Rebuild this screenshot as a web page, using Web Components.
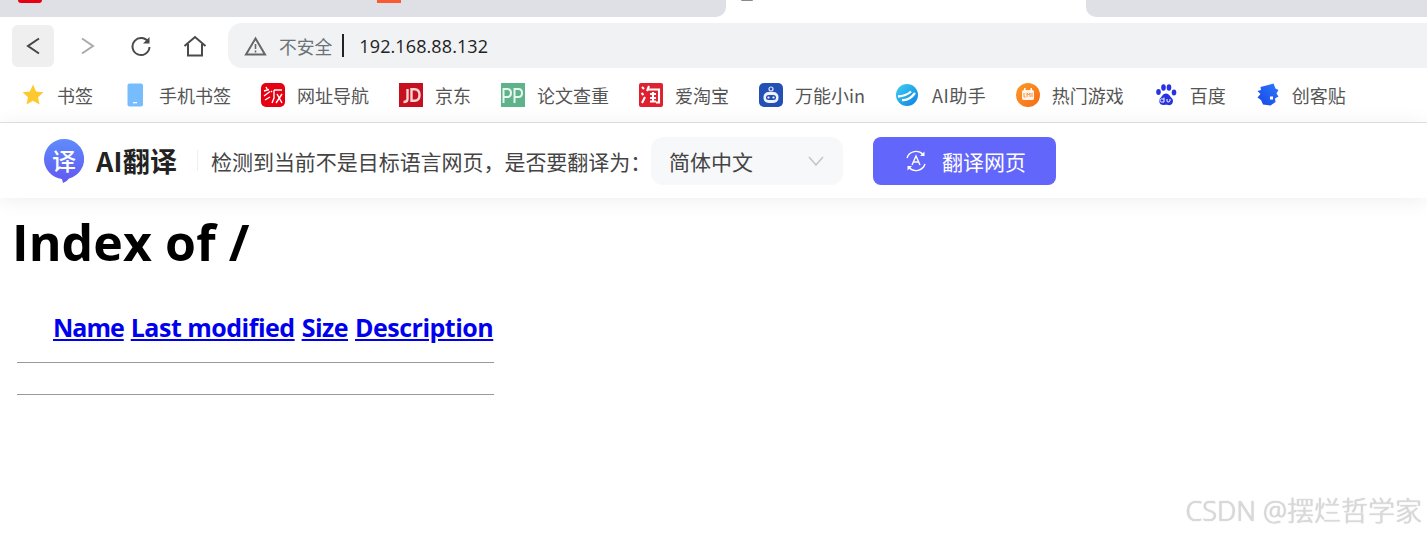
<!DOCTYPE html>
<html lang="zh"><head><meta charset="utf-8"><title>Index of /</title>
<style>
html,body{margin:0;height:100%;background:#fff;overflow:hidden}
body{width:1427px;height:537px;position:relative;font-family:"Noto Sans","Noto Sans CJK SC",sans-serif}
</style></head><body>
<x-tabstrip></x-tabstrip>
<x-toolbar></x-toolbar>
<x-bookmarks>
<x-bookmark label="书签"><svg viewBox="0 0 24 24"><path fill="#fdc92f" d="M12 1.500l3.100 6.900 7.300.8-5.400 5 1.500 7.300-6.500-3.700-6.500 3.700 1.500-7.300-5.400-5 7.300-.8z"/></svg></x-bookmark>
<x-bookmark label="手机书签"><svg viewBox="0 0 24 24"><rect x="4.500" y="0.500" width="15.500" height="23" rx="2" fill="#77bdfd"/><rect x="10" y="19" width="4" height="1.300" fill="#fff"/></svg></x-bookmark>
<x-bookmark label="网址导航"><svg viewBox="0 0 24 24"><rect width="24" height="24" rx="5" fill="#e60012"/><path d="M3 8l5-1.500M5 4l1.500 3M3 13l6-4.500M4 17l5-3M13 7h8M13 7v8l-2 5M16 11l5 9M21 11l-6 9M11 8l-1 1" stroke="#fff" stroke-width="1.400" fill="none"/></svg></x-bookmark>
<x-bookmark label="京东"><svg viewBox="0 0 24 24"><rect width="24" height="24" fill="#c5111f"/><path d="M8.500 6v10q0 3-4 3" stroke="#f6d5d8" stroke-width="2.400" fill="none"/><path d="M12.500 6.200h3q5 0 5 5.800t-5 5.800h-3z" stroke="#f6d5d8" stroke-width="2.400" fill="none"/></svg></x-bookmark>
<x-bookmark label="论文查重"><svg viewBox="0 0 24 24"><rect width="24" height="24" fill="#5fb38b"/><path d="M2.500 20V6h4q3.500 0 3.500 4t-3.500 4h-4M13.500 20V6h4q3.500 0 3.500 4t-3.500 4h-4" stroke="#e9f5ef" stroke-width="2" fill="none"/></svg></x-bookmark>
<x-bookmark label="爱淘宝"><svg viewBox="0 0 24 24"><rect width="24" height="24" rx="2" fill="#df2030"/><path d="M3 4l2 2M2.500 10l2 2M3 20l3-6M10 3l-2 5M9 6.500h11v13h-3M11 11h6M11 15h6M14 9v9M11 18.500h6" stroke="#fff" stroke-width="2.100" fill="none"/></svg></x-bookmark>
<x-bookmark label="万能小in"><svg viewBox="0 0 24 24"><rect width="24" height="24" rx="5" fill="#2350b4"/><circle cx="12" cy="6" r="2" fill="none" stroke="#dfe8fb" stroke-width="1.200"/><rect x="4.500" y="9" width="15" height="11" rx="5" fill="#eef3ff"/><rect x="7" y="12" width="10" height="5" rx="2.500" fill="#2350b4"/><circle cx="9.500" cy="14.500" r="1.100" fill="#fff"/><circle cx="14.500" cy="14.500" r="1.100" fill="#fff"/></svg></x-bookmark>
<x-bookmark label="AI助手" style="--ls:.5px;--gap:13px"><svg viewBox="0 0 24 24"><defs><linearGradient id="e" x1="0" y1="0" x2="1" y2="1"><stop offset="0" stop-color="#3fd0ef"/><stop offset="1" stop-color="#0d7fe8"/></linearGradient></defs><circle cx="12" cy="12" r="11" fill="url(#e)"/><path d="M3 13.500q8-.5 13-5M7 17q7 1 13-7" stroke="#fff" stroke-width="2.300" fill="none"/></svg></x-bookmark>
<x-bookmark label="热门游戏" style="--gap:11.500px"><svg viewBox="0 0 24 24"><defs><linearGradient id="g" x1="0" y1="0" x2="1" y2="1"><stop offset="0" stop-color="#fd9a2a"/><stop offset="1" stop-color="#f56a16"/></linearGradient></defs><circle cx="12" cy="12" r="12" fill="url(#g)"/><rect x="6" y="7" width="12" height="10" rx="1.500" fill="#fff" opacity=".9"/><rect x="8" y="5" width="1.500" height="3" fill="#fff"/><rect x="14.500" y="5" width="1.500" height="3" fill="#fff"/><path d="M8 10v4h1.500M11 14v-4l1.500 2 1.500-2v4M16 10v4" stroke="#f58a2a" stroke-width=".9" fill="none"/></svg></x-bookmark>
<x-bookmark label="百度"><svg viewBox="0 0 24 24"><g fill="#2932e1"><ellipse cx="4.500" cy="9" rx="2.300" ry="3"/><ellipse cx="9.500" cy="4.500" rx="2.300" ry="3.200"/><ellipse cx="15" cy="4.500" rx="2.300" ry="3.200"/><ellipse cx="20" cy="9.500" rx="2.300" ry="3"/><path d="M12 10.500c-3 0-4 3-6 5-2 3 0 7 4 6.500 1.500-.2 2.500-.5 4 0 4 1 6-3 4.500-6-2-2-3.500-5.500-6.500-5.500z"/></g><path d="M10 14.500v4.500H8.200a1.600 1.600 0 1 1 0-3H10M13 16v2q0 1 1.200 1t1.800-1v-2" fill="none" stroke="#fff" stroke-width="1"/></svg></x-bookmark>
<x-bookmark label="创客贴"><svg viewBox="0 0 24 24"><defs><linearGradient id="c" x1="1" y1="0" x2="0" y2="1"><stop offset="0" stop-color="#2d7bfa"/><stop offset="1" stop-color="#1844e8"/></linearGradient></defs><path fill="url(#c)" d="M4.500 4L17.500.5l2 5 3 1.500-2 3.500 2 3-3.500 2 .5 3.500-5 3.500-7.500-1L5 17 1.500 14.500 4.500 11 1.500 8 5 7z"/><rect x="14" y="13.500" width="3" height="3" fill="#fff"/></svg></x-bookmark>
</x-bookmarks>
<x-translate-bar></x-translate-bar>
<x-listing></x-listing>
<x-watermark>CSDN @摆烂哲学家</x-watermark>
<script>
function el(name,css,html){
  customElements.define(name,class extends HTMLElement{
    constructor(){super();const s=this.attachShadow({mode:"open"});
      s.innerHTML=`<style>${css}</style>`+(typeof html==="function"?html(this):html);}
  });
}
el("x-tabstrip",`
:host{display:flex;height:23px;background:#fff;overflow:hidden}
.tab{height:17px;background:#dfe0e5;position:relative}
.l{width:726px;border-bottom-right-radius:10px}
.m{width:360px}
.r{flex:1;border-bottom-left-radius:10px}
i{position:absolute;top:0;display:block}
.a{left:18px;width:24px;height:3px;background:#e60012;border-radius:0 0 6px 6px}
.b{left:377px;width:24px;height:3px;background:#f95a32}
.c{left:15px;width:12px;height:1px;background:#8a8a8a;border-radius:0 0 6px 6px}
.m.tab{background:#fff}
`,`<div class="tab l"><i class="a"></i><i class="b"></i></div><div class="tab m"><i class="c"></i></div><div class="tab r"></div>`);
el("x-toolbar",`
:host{display:flex;align-items:center;height:45px;padding-left:12px;box-sizing:border-box;background:#fff}
.btn{width:42px;height:42px;display:flex;align-items:center;justify-content:center;border-radius:6px;margin-right:12px}
.btn.on{background:#efefef}
svg{display:block}
.addr{flex:1;height:45px;background:#f1f2f4;border-radius:14px 0 0 14px;display:flex;align-items:center;padding-left:16px;font-size:18px}
.warn{color:#6b7177;font-size:17.800px;margin-left:12px;white-space:nowrap}
.bar{width:2px;height:23px;background:#222;margin:0 15px 0 10px}
.url{color:#222;font-size:18px;font-family:"Open Sans","Noto Sans",sans-serif;letter-spacing:.1px}
`,`<div class="btn on"><svg width="16" height="22" viewBox="0 0 16 22"><path d="M14 3.500L3 11l11 7.500" fill="none" stroke="#444" stroke-width="2"/></svg></div>
<div class="btn"><svg width="16" height="22" viewBox="0 0 16 22"><path d="M3 3.500L14 11 3 18.500" fill="none" stroke="#aaa" stroke-width="2"/></svg></div>
<div class="btn"><svg width="22" height="22" viewBox="0 0 22 22"><path d="M18.500 7.500A8.500 8.500 0 1 0 19.500 12" fill="none" stroke="#4a4a4a" stroke-width="2"/><path d="M19.500 2v6.500H13z" fill="#4a4a4a"/></svg></div>
<div class="btn"><svg width="24" height="22" viewBox="0 0 24 22"><path d="M1.500 11L12 2l10.500 9M5 9v11.500h14V9" fill="none" stroke="#4a4a4a" stroke-width="2"/></svg></div>
<div class="addr"><svg width="23" height="20" viewBox="0 0 23 20"><path d="M11.500 2.500L2 18.500h19z" fill="none" stroke="#666" stroke-width="2"/><path d="M11.500 8v5M11.500 14.500v2" stroke="#666" stroke-width="1.600"/></svg><span class="warn">不安全</span><span class="bar"></span><span class="url">192.168.88.132</span></div>`);
el("x-bookmarks",`
:host{display:flex;align-items:center;gap:30px;height:55px;padding-left:21px;box-sizing:border-box;border-bottom:1px solid #e3e3e3;background:#fff}
`,`<slot></slot>`);
el("x-bookmark",`
:host{display:flex;align-items:center;gap:var(--gap,12px);letter-spacing:var(--ls,0);color:#555;font-size:18px;font-family:"Noto Sans CJK SC","Noto Sans",sans-serif;white-space:nowrap}
.i{width:24px;height:24px;display:block}
::slotted(svg){width:24px;height:24px;display:block}
`,h=>`<span class="i"><slot></slot></span><span>${h.getAttribute("label")}</span>`);
el("x-translate-bar",`
:host{display:flex;align-items:center;height:75px;box-sizing:border-box;padding-left:44px;background:#fff;box-shadow:0 2px 20px rgba(0,0,0,.07);position:relative;font-family:"Noto Sans CJK SC","Noto Sans",sans-serif;color:#444;font-size:21px}
svg{display:block;flex:none}
.logo{width:40px;height:44px;position:relative;margin-right:12px}
.logo b{position:absolute;left:8px;top:9px;font-size:24px;line-height:24px;color:#fff;font-weight:500}
.name{font-size:27px;font-weight:700;color:#222;white-space:nowrap;width:81px;letter-spacing:.3px}
.sep{width:1px;height:21px;background:#eee;margin:0 13px 0 20px}
.msg{white-space:nowrap;width:440px;letter-spacing:-.04px}
.sel{width:192px;height:48px;background:#f7f8fa;border-radius:12px;display:flex;align-items:center;justify-content:space-between;padding:0 19px 0 18px;box-sizing:border-box;margin-right:30px}
.btn{width:183px;height:48px;background:#6366fa;border-radius:8px;color:#fff;display:flex;align-items:center;gap:14px;padding-left:31px;box-sizing:border-box}
`,`<div class="logo"><svg width="40" height="44" viewBox="0 0 40 44"><defs><linearGradient id="t" x1="0" y1="0" x2="0" y2="1"><stop offset="0" stop-color="#5f8cfb"/><stop offset="1" stop-color="#6357f2"/></linearGradient></defs><path fill="url(#t)" d="M20 0a20 20 0 0 1 5 39.400q-2 3-6 4.600l-1-4.100A20 20 0 0 1 20 0z"/></svg><b>译</b></div>
<span class="name">AI翻译</span><span class="sep"></span><span class="msg">检测到当前不是目标语言网页，是否要翻译为：</span>
<div class="sel"><span>简体中文</span><svg width="16" height="10" viewBox="0 0 16 10"><path d="M1 1l7 8 7-8" fill="none" stroke="#c4c4c4" stroke-width="1.500"/></svg></div>
<div class="btn"><svg width="24" height="24" viewBox="0 0 24 24"><path d="M3 9a9.500 9.500 0 0 1 16-3.500M21 15a9.500 9.500 0 0 1-16 3.500" fill="none" stroke="#fff" stroke-width="1.400"/><path d="M20.500 2.500V7h-4.500zM3.500 21.500V17h4.500z" fill="#fff"/><path d="M8 16l4-9 4 9M9.500 13h5" fill="none" stroke="#fff" stroke-width="1.400"/></svg><span>翻译网页</span></div>`);
el("x-listing",`
:host{display:block;padding:19px 0 0 12px;font-family:"Open Sans","Noto Sans",sans-serif;color:#000}
h1{margin:0;font-size:50px;line-height:50px;font-weight:700;letter-spacing:.1px}
.t{margin:44px 0 0 5px;width:477px}
.h{display:flex;gap:7px;padding-left:36px;height:32px;align-items:center;white-space:nowrap;font-size:25px;line-height:32px;font-weight:700;letter-spacing:-.5px}
a{color:#0000ee;text-decoration:underline}
a.n{letter-spacing:-1px}
hr{margin:0;border:0;height:1px;background:#999}
.h+hr{margin-top:19px}
hr+hr{margin-top:31px}
`,`<h1>Index of /</h1><div class="t"><div class="h"><a class="n" href="#">Name</a><a href="#">Last modified</a><a href="#">Size</a><a href="#">Description</a></div><hr><hr></div>`);
el("x-watermark",`
:host{position:absolute;right:5px;top:492px;font-size:27px;line-height:38px;font-weight:300;color:#dadada;text-shadow:0 0 1px #b5b5b5;font-family:"Noto Sans","Noto Sans CJK SC",sans-serif;white-space:nowrap}
`,`<slot></slot>`);
</script>
</body></html>
